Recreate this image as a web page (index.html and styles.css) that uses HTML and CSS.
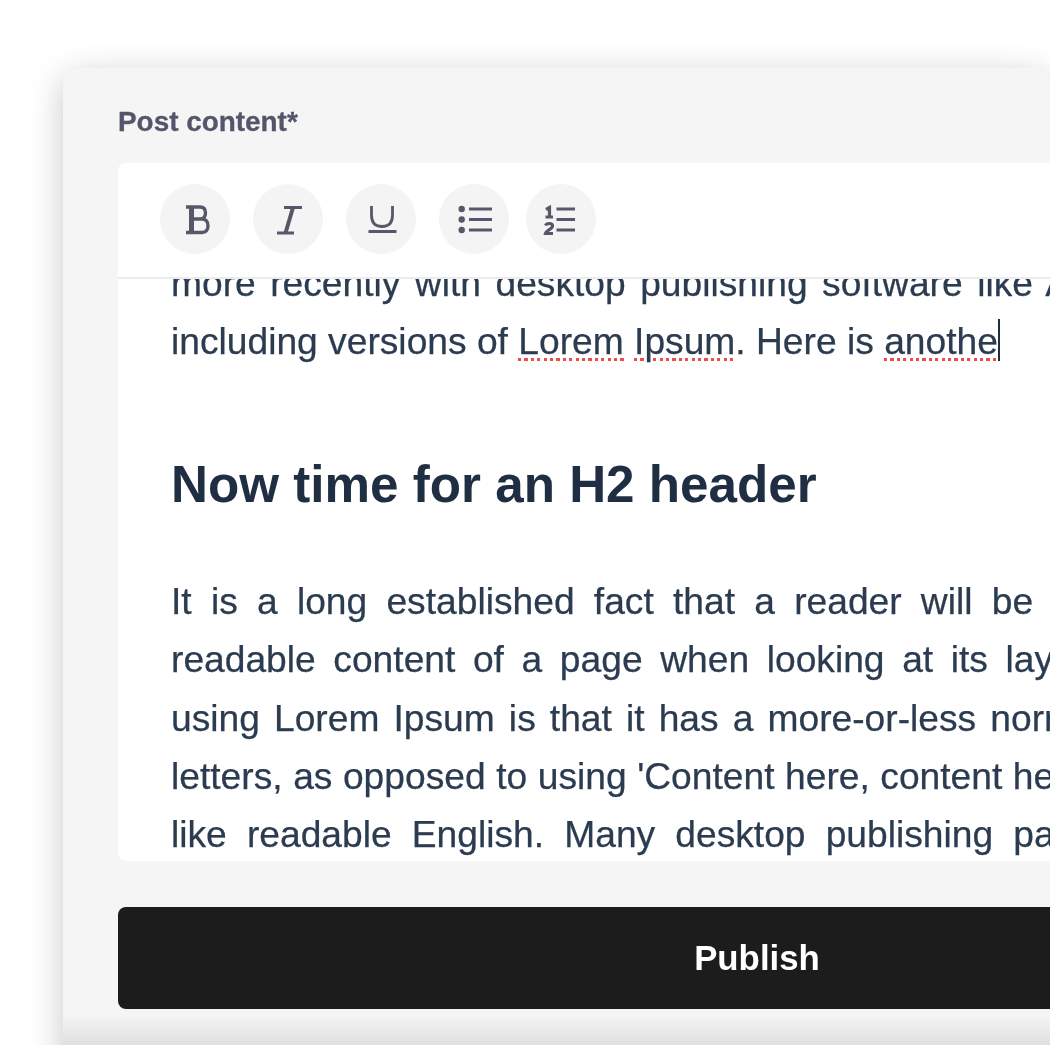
FILE: index.html
```html
<!DOCTYPE html>
<html lang="en">
<head>
    <meta charset="UTF-8">
    <meta name="viewport" content="width=device-width, initial-scale=1.0">
    <title>New Post</title>
    <link rel="stylesheet" href="styles.css">
</head>
<body>
    <div class="card">
        <label class="field-label">Post content*</label>
        <div class="editor">
            <div class="toolbar">
                <button class="tool-btn" aria-label="Bold">
                    <svg viewBox="0 0 36 36" class="tool-icon icon-bold">
                        <path d="M9 6H23c3.800 0 5.500 2.300 5.500 5.800S26.800 18 23 18H14M9 31.500H25c4 0 6-2.800 6-6.700S29 18 25 18H14"/>
                        <path class="stem" d="M14.500 6V31.500"/>
                    </svg>
                </button>
                <button class="tool-btn" aria-label="Italic">
                    <svg viewBox="0 0 36 36" class="tool-icon">
                        <path d="M14 6.500H32M7 32H24"/>
                        <path class="stem" d="M23 6.500L15.500 32"/>
                    </svg>
                </button>
                <button class="tool-btn" aria-label="Underline">
                    <svg viewBox="0 0 36 36" class="tool-icon">
                        <path d="M8.500 5V14c0 8 3.500 11.500 10.500 11.500S29.500 22 29.500 14V5M5.500 30.500H33.500"/>
                    </svg>
                </button>
                <button class="tool-btn" aria-label="Bulleted list">
                    <svg viewBox="0 0 36 36" class="tool-icon icon-list">
                        <path d="M13 8H36M13 18.500H36M13 29H36"/>
                        <circle class="dot" cx="5.700" cy="8" r="3.200"/>
                        <circle class="dot" cx="5.700" cy="18.500" r="3.200"/>
                        <circle class="dot" cx="5.700" cy="29" r="3.200"/>
                    </svg>
                </button>
                <button class="tool-btn tool-btn-tight" aria-label="Numbered list">
                    <svg viewBox="0 0 36 36" class="tool-icon icon-list">
                        <path d="M13.500 8H32M13.500 18.500H32M13.500 29H32"/>
                        <path d="M3 8.500L6.500 6.500V16M2.500 16H10M2.500 24.500c1-2.500 7-3 7 .5 0 3-6 4-7 7.500H10"/>
                    </svg>
                </button>
            </div>
            <div class="content">
                <div class="content-inner">
                    <p class="para">more recently with desktop publishing software like Aldus PageMaker
                        including versions of <span class="typo">Lorem</span> <span class="typo">Ipsum</span>. Here is <span class="typo">anothe</span><span class="caret"></span></p>
                    <h2 class="heading">Now time for an H2 header</h2>
                    <p class="para">It is a long established fact that a reader will be distracted by the
                        readable content of a page when looking at its layout. The point of
                        using Lorem Ipsum is that it has a more-or-less normal distribution of
                        letters, as opposed to using 'Content here, content here', making it look
                        like readable English. Many desktop publishing packages and web page
                        editors now use Lorem Ipsum as their default model text.</p>
                </div>
            </div>
        </div>
        <button class="publish">Publish</button>
    </div>
    <div class="bottom-fade"></div>
</body>
</html>
```

FILE: styles.css
```css
html, body {
    margin: 0;
    padding: 0;
    height: 100%;
}

body {
    background-color: #fff;
    font-family: "Liberation Sans", Arial, sans-serif;
    overflow: hidden;
    position: relative;
    padding: 68px 0 0 63px;
    box-sizing: border-box;
}

.card {
    width: 987px;
    height: 1100px;
    box-sizing: border-box;
    padding: 39px 0 0 55px;
    background-color: #f5f5f5;
    border-radius: 16px;
    box-shadow: 0 8px 34px rgba(0, 0, 0, 0.22);
    filter: blur(0.6px);
}

.field-label {
    display: block;
    height: 56px;
    line-height: 30px;
    font-size: 27.900px;
    font-weight: bold;
    color: #53566a;
    -webkit-text-stroke: 0.3px #53566a;
}

.editor {
    width: 1278px;
    height: 698px;
    display: flex;
    flex-direction: column;
    background-color: #fff;
    border-radius: 8px;
    overflow: hidden;
}

.toolbar {
    flex: none;
    height: 116px;
    box-sizing: border-box;
    padding: 21px 0 0 42px;
    display: flex;
    gap: 23px;
    border-bottom: 2px solid #ebebf0;
}

.tool-btn {
    width: 70px;
    height: 70px;
    padding: 0;
    border: none;
    border-radius: 50%;
    background-color: #f4f4f5;
    display: flex;
    justify-content: center;
    align-items: center;
}

.tool-btn-tight {
    margin-left: -6px;
}

.tool-icon {
    width: 36px;
    height: 36px;
    overflow: visible;
    fill: none;
    stroke: #565869;
    stroke-width: 2.800;
}

.tool-icon .dot {
    fill: #565869;
    stroke: none;
}

.tool-icon .stem {
    stroke-width: 4;
}

.icon-bold {
    stroke-width: 3.400;
}

.icon-bold .stem {
    stroke-width: 5;
}

.icon-list {
    stroke-width: 3.200;
}

.content {
    flex: 1;
    overflow: hidden;
    padding: 0 53px;
}

.content-inner {
    margin-top: -25px;
}

.para {
    margin: 0;
    font-size: 37.200px;
    line-height: 58.400px;
    color: #2b3b50;
    -webkit-text-stroke: 0.25px #2b3b50;
    text-align: justify;
}

.heading {
    margin: 85px 0 58px;
    font-size: 51.200px;
    line-height: 58px;
    font-weight: bold;
    color: #1f2e42;
}

.typo {
    background-image: repeating-linear-gradient(to right, #f04a4a 0 3.200px, transparent 3.200px 6.400px);
    background-repeat: no-repeat;
    background-size: 100% 3px;
    background-position: 0 calc(100% - 1px);
}

.caret {
    display: inline-block;
    width: 0;
    height: 42px;
    margin-right: -2px;
    border-left: 2px solid #1f2e42;
    vertical-align: -7px;
}

.publish {
    display: block;
    width: 1278px;
    height: 102px;
    margin-top: 46px;
    border: none;
    border-radius: 8px;
    background-color: #1c1c1c;
    color: #fff;
    font-family: inherit;
    font-size: 34.800px;
    font-weight: bold;
}

.bottom-fade {
    position: absolute;
    left: 63px;
    right: 0;
    bottom: 0;
    height: 30px;
    background: linear-gradient(to bottom, rgba(0, 0, 0, 0), rgba(0, 0, 0, 0.09));
}
```
